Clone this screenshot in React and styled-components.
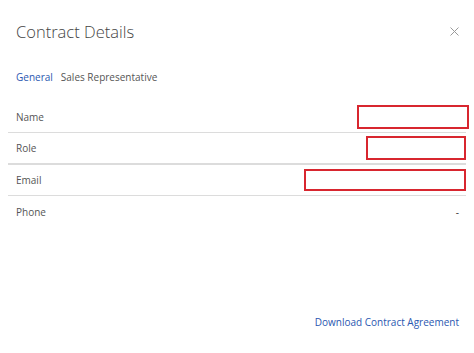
import React from 'react';
import styled, { createGlobalStyle } from 'styled-components';

const GlobalStyle = createGlobalStyle`
  html, body {
    margin: 0;
    padding: 0;
    background: #fff;
  }
  body {
    font-family: "Open Sans", "Liberation Sans", sans-serif;
  }
`;

const rows = [
  { label: 'Name', height: 32, box: { width: 112, height: 24, shift: -9 } },
  { label: 'Role', height: 32, box: { width: 100, height: 24, shift: -6 } },
  { label: 'Email', height: 31, box: { width: 162, height: 22, shift: -6 } },
  { label: 'Phone', height: 31, value: '-' },
];

export default function App() {
  return (
    <Modal>
      <GlobalStyle />
      <Header>
        <Title>Contract Details</Title>
        <Close aria-label="close">
          <svg width="9" height="9" viewBox="0 0 9 9">
            <path d="M0.5 0.5 L8.5 8.5 M8.5 0.5 L0.5 8.5" stroke="#9a9a9a" strokeWidth="1" />
          </svg>
        </Close>
      </Header>
      <Tabs>
        <Tab active>General</Tab>
        <Tab>Sales Representative</Tab>
      </Tabs>
      <Rows>
        {rows.map((row, i) => (
          <Row key={row.label} $h={row.height} last={i === rows.length - 1} thick={i === 1}>
            <Label>{row.label}</Label>
            {row.box ? (
              <Marker $w={row.box.width} $h={row.box.height} $shift={row.box.shift} />
            ) : (
              <Value>{row.value}</Value>
            )}
          </Row>
        ))}
      </Rows>
      <Footer>
        <Link href="#">Download Contract Agreement</Link>
      </Footer>
    </Modal>
  );
}

const Modal = styled.div`
  height: 353px;
  display: flex;
  flex-direction: column;
  box-sizing: border-box;
`;

const Header = styled.div`
  height: 62px;
  display: flex;
  align-items: center;
  justify-content: space-between;
  padding: 0 16px 0 16px;
`;

const Title = styled.h1`
  margin: 0;
  font-size: 16.5px;
  font-weight: 300;
  color: #454545;
`;

const Close = styled.button`
  border: none;
  background: transparent;
  padding: 0;
  margin-right: -1px;
  display: flex;
  cursor: pointer;
`;

const Tabs = styled.div`
  height: 30px;
  display: flex;
  align-items: center;
  gap: 8px;
  padding: 0 16px;
`;

const Tab = styled.span`
  font-size: 10px;
  color: ${(p) => (p.active ? '#2a57b0' : '#555')};
  cursor: pointer;
`;

const Rows = styled.div`
  margin: 9px 8px 0 8px;
`;

const Row = styled.div`
  height: ${(p) => p.$h}px;
  display: flex;
  align-items: center;
  justify-content: space-between;
  padding: 0 7px 0 8px;
  box-sizing: border-box;
  border-bottom: ${(p) => (p.last ? 'none' : `${p.thick ? 2 : 1}px solid #dcdcdc`)};
`;

const Label = styled.span`
  font-size: 10px;
  color: #555;
`;

const Value = styled.span`
  font-size: 10px;
  color: #333;
`;

const Marker = styled.div`
  width: ${(p) => p.$w}px;
  height: ${(p) => p.$h}px;
  box-sizing: border-box;
  border: 2px solid #d8262f;
  margin-right: ${(p) => p.$shift - 1}px;
`;

const Footer = styled.div`
  margin-top: auto;
  display: flex;
  justify-content: flex-end;
  padding: 0 15px 23px 0;
`;

const Link = styled.a`
  font-size: 10px;
  line-height: 16px;
  color: #2a57b0;
  text-decoration: none;
`;
